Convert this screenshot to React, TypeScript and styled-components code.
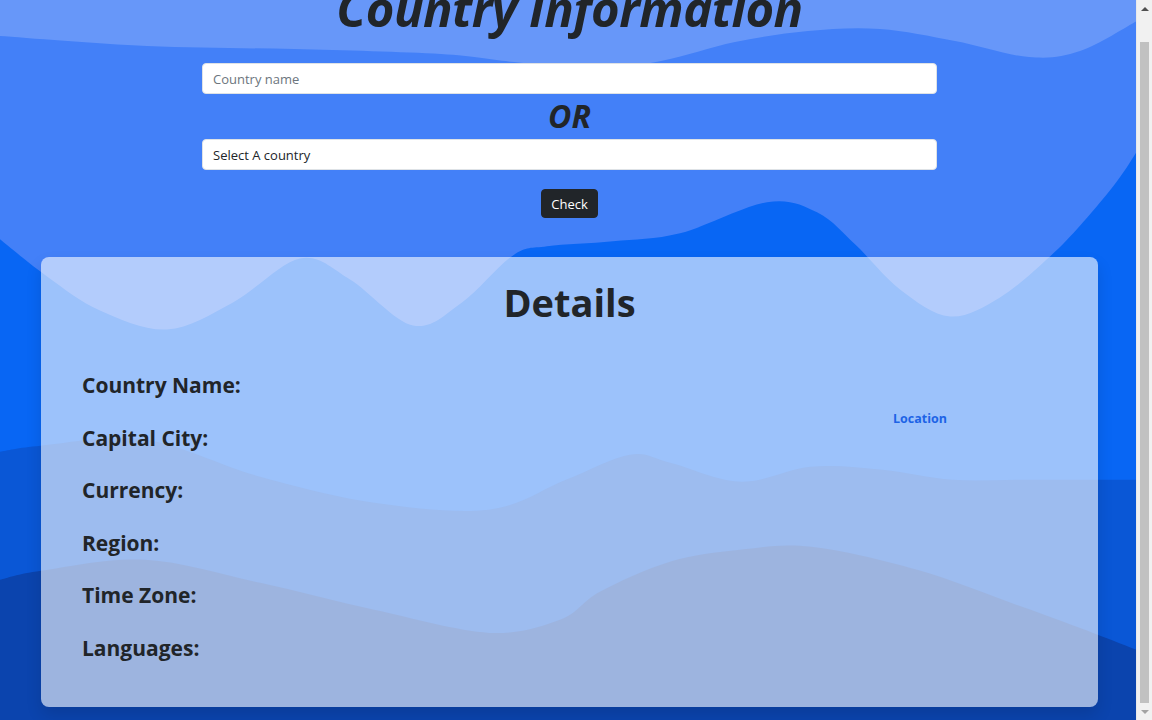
import React, { useLayoutEffect } from "react";
import styled, { createGlobalStyle } from "styled-components";

const FONT = `"Open Sans", "Noto Sans", "DejaVu Sans", sans-serif`;
const INK = "#212529";

const GlobalStyle = createGlobalStyle`
  html {
    scrollbar-width: none;
  }
  html, body {
    margin: 0;
    padding: 0;
  }
  body {
    padding-right: 15px;
    font-family: ${FONT};
    color: ${INK};
    background: #0b44ae;
  }
`;

const Page = styled.div`
  position: relative;
  min-height: 747px;
  overflow: hidden;
`;

const Backdrop = styled.svg`
  position: absolute;
  inset: 0;
  width: 100%;
  height: 100%;
  z-index: 0;
`;

const Content = styled.main`
  position: relative;
  z-index: 1;
  display: flex;
  flex-direction: column;
  align-items: center;
  padding: 0 39px 13px 41px;
`;

const Title = styled.h1`
  margin: 7px 0 0;
  font-size: 49px;
  line-height: 58px;
  font-weight: 700;
  font-style: italic;
  letter-spacing: -0.5px;
`;

const SearchForm = styled.form`
  width: 735px;
  display: flex;
  flex-direction: column;
  align-items: center;
  margin-top: 26px;
`;

const TextField = styled.input`
  box-sizing: border-box;
  width: 100%;
  height: 31px;
  padding: 0 10px;
  border: 1px solid #dee2e6;
  border-radius: 4px;
  background: #fff;
  font-family: ${FONT};
  font-size: 13px;
  color: ${INK};
  outline: none;
  &::placeholder {
    color: #6c757d;
  }
`;

const SelectField = styled.select`
  box-sizing: border-box;
  width: 100%;
  height: 31px;
  padding: 0 10px;
  border: 1px solid #dee2e6;
  border-radius: 4px;
  background: #fff;
  font-family: ${FONT};
  font-size: 13px;
  color: ${INK};
  appearance: none;
  outline: none;
`;

const OrLabel = styled.h2`
  box-sizing: border-box;
  margin: 0;
  height: 45px;
  padding-bottom: 3px;
  display: flex;
  align-items: center;
  font-size: 32px;
  font-weight: 700;
  font-style: italic;
`;

const CheckButton = styled.button`
  margin-top: 19px;
  height: 29px;
  padding: 0 9px;
  border: 1px solid #212529;
  border-radius: 4px;
  background: #212529;
  color: #fff;
  font-family: ${FONT};
  font-size: 13px;
  cursor: pointer;
`;

const DetailsCard = styled.section`
  box-sizing: border-box;
  align-self: stretch;
  height: 450px;
  margin-top: 39px;
  padding: 20px 41px 0;
  border-radius: 8px;
  background: rgba(255, 255, 255, 0.6);
  box-shadow: 0 8px 16px rgba(0, 0, 0, 0.12);
`;

const CardTitle = styled.h2`
  margin: 0;
  text-align: center;
  font-size: 38px;
  line-height: 50px;
  font-weight: 700;
`;

const CardBody = styled.div`
  display: grid;
  grid-template-columns: 1fr 274px;
  margin-top: 44px;
`;

const InfoList = styled.div`
  display: flex;
  flex-direction: column;
  gap: 23.5px;
`;

const InfoLabel = styled.h4`
  margin: 0;
  font-size: 21px;
  line-height: 29px;
  font-weight: 700;
`;

const LocationPane = styled.div`
  display: flex;
  justify-content: center;
  padding-top: 39px;
`;

const LocationLink = styled.a`
  height: 18px;
  font-size: 12.5px;
  font-weight: 700;
  color: #1d63e6;
  text-decoration: none;
`;

/* window scrollbar, drawn as the page had it (scrolled to the bottom) */
const ScrollRail = styled.div`
  position: fixed;
  top: 0;
  right: 0;
  bottom: 0;
  width: 15px;
  z-index: 5;
  display: flex;
  flex-direction: column;
  background: #f1f1f1;
  border-left: 1px solid #e9e9e9;
`;

const RailArrow = styled.div<{ $down?: boolean; $dim?: boolean }>`
  height: 17px;
  flex: none;
  display: flex;
  align-items: center;
  justify-content: center;
  &::after {
    content: "";
    border-left: 4px solid transparent;
    border-right: 4px solid transparent;
    ${(p) =>
      p.$down
        ? `border-top: 4px solid ${p.$dim ? "#a3a3a3" : "#505050"};`
        : `border-bottom: 4px solid ${p.$dim ? "#a3a3a3" : "#505050"};`}
  }
`;

const RailTrack = styled.div`
  flex: 1;
  display: flex;
  flex-direction: column;
  padding-top: 25px;
`;

const RailThumb = styled.div`
  flex: 1;
  margin: 0 3px 0 3px;
  background: #c1c1c1;
`;

type Pt = [number, number];

// catmull-rom -> cubic bezier so the wave edges stay soft
const smoothLine = (pts: Pt[]) => {
  let d = `M${pts[0][0]},${pts[0][1]}`;
  for (let i = 0; i < pts.length - 1; i++) {
    const p0 = pts[i - 1] || pts[i];
    const p1 = pts[i];
    const p2 = pts[i + 1];
    const p3 = pts[i + 2] || p2;
    const c1x = p1[0] + (p2[0] - p0[0]) / 6;
    const c1y = p1[1] + (p2[1] - p0[1]) / 6;
    const c2x = p2[0] - (p3[0] - p1[0]) / 6;
    const c2y = p2[1] - (p3[1] - p1[1]) / 6;
    d += ` C${c1x.toFixed(1)},${c1y.toFixed(1)} ${c2x.toFixed(1)},${c2y.toFixed(1)} ${p2[0]},${p2[1]}`;
  }
  return d;
};

const W = 1137;
const BOTTOM = 720;

const waves: { color: string; edge: Pt[] }[] = [
  {
    color: "#4380f8",
    edge: [
      [0, 37], [147, 47], [294, 50], [441, 55], [514, 63], [590, 70], [661, 62],
      [735, 43], [808, 32], [880, 30], [955, 42], [1029, 58], [1080, 52], [1137, 22],
    ],
  },
  {
    color: "#0866f4",
    edge: [
      [0, 240], [47, 277], [100, 311], [167, 330], [233, 303], [300, 259], [350, 280],
      [413, 326], [462, 303], [513, 256], [547, 247], [613, 242], [680, 234], [767, 203],
      [817, 213], [855, 245], [900, 290], [950, 317], [1000, 298], [1050, 257],
      [1083, 223], [1117, 182], [1137, 152],
    ],
  },
  {
    color: "#0a57d6",
    edge: [
      [0, 452], [41, 446], [145, 440], [260, 477], [374, 503], [489, 510], [566, 480],
      [630, 455], [670, 463], [741, 482], [811, 467], [882, 470], [952, 480],
      [1022, 480], [1093, 480], [1137, 480],
    ],
  },
  {
    color: "#0b44ae",
    edge: [
      [0, 580], [41, 571], [145, 560], [260, 583], [374, 610], [489, 633], [560, 620],
      [600, 592], [670, 562], [740, 550], [811, 547], [917, 570], [1022, 607],
      [1093, 633], [1137, 650],
    ],
  },
];

const WaveBackdrop = () => (
  <Backdrop viewBox={`0 -27 ${W} 747`} preserveAspectRatio="none" aria-hidden>
    <rect x={0} y={-27} width={W} height={747} fill="#6797f9" />
    {waves.map((w) => (
      <path
        key={w.color}
        d={`${smoothLine(w.edge)} L${W},${BOTTOM} L0,${BOTTOM} Z`}
        fill={w.color}
      />
    ))}
  </Backdrop>
);

const fields = [
  "Country Name:",
  "Capital City:",
  "Currency:",
  "Region:",
  "Time Zone:",
  "Languages:",
];

export default function App() {
  useLayoutEffect(() => {
    window.scrollTo(0, document.documentElement.scrollHeight);
  }, []);

  return (
    <>
      <GlobalStyle />
      <Page>
        <WaveBackdrop />
        <Content>
          <Title>Country Information</Title>
          <SearchForm onSubmit={(e) => e.preventDefault()}>
            <TextField type="text" placeholder="Country name" />
            <OrLabel>OR</OrLabel>
            <SelectField defaultValue="">
              <option value="">Select A country</option>
            </SelectField>
            <CheckButton type="submit">Check</CheckButton>
          </SearchForm>
          <DetailsCard>
            <CardTitle>Details</CardTitle>
            <CardBody>
              <InfoList>
                {fields.map((f) => (
                  <InfoLabel key={f}>{f}</InfoLabel>
                ))}
              </InfoList>
              <LocationPane>
                <LocationLink href="#">Location</LocationLink>
              </LocationPane>
            </CardBody>
          </DetailsCard>
        </Content>
      </Page>
      <ScrollRail aria-hidden>
        <RailArrow />
        <RailTrack>
          <RailThumb />
        </RailTrack>
        <RailArrow $down $dim />
      </ScrollRail>
    </>
  );
}
